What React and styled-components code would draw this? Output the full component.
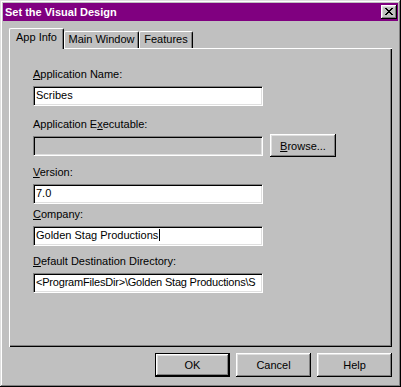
import React from 'react';
import styled, { createGlobalStyle } from 'styled-components';

const GlobalStyle = createGlobalStyle`
  html, body {
    margin: 0;
    padding: 0;
    background: #c0c0c0;
  }
  body {
    font-family: "Liberation Sans", Arial, sans-serif;
    font-size: 11px;
    color: #000;
  }
`;

const bevelOut = `
  box-shadow: inset -1px -1px #000, inset 1px 1px #fff, inset -2px -2px #808080, inset 2px 2px #dfdfdf;
`;

const Win = styled.div`
  box-sizing: border-box;
  width: 401px;
  height: 387px;
  padding: 3px;
  background: #c0c0c0;
  box-shadow: inset -1px -1px #000, inset 1px 1px #dfdfdf, inset -2px -2px #808080, inset 2px 2px #fff;
  display: flex;
  flex-direction: column;
`;

const TitleBar = styled.div`
  height: 18px;
  flex: none;
  background: #800080;
  display: flex;
  align-items: center;
  justify-content: space-between;
  padding: 0 1px 0 2px;
`;

const Title = styled.span`
  color: #fff;
  font-weight: bold;
  font-size: 11px;
  line-height: 13px;
`;

const CloseBtn = styled.button`
  width: 16px;
  height: 14px;
  padding: 0 1px 1px 0;
  border: 0;
  background: #c0c0c0;
  ${bevelOut}
  display: flex;
  align-items: center;
  justify-content: center;
`;

const Body = styled.div`
  flex: 1;
  padding: 7px 6px 7px;
  display: flex;
  flex-direction: column;
`;

const TabStrip = styled.div`
  height: 20px;
  display: flex;
  align-items: flex-end;
  position: relative;
  z-index: 1;
`;

const Tab = styled.div`
  box-sizing: border-box;
  width: ${p => p.w}px;
  height: ${p => (p.active ? 21 : 17)}px;
  margin-bottom: ${p => (p.active ? -1 : 0)}px;
  background: #c0c0c0;
  border-top: 1px solid #fff;
  border-left: 1px solid #fff;
  border-right: 1px solid #000;
  border-radius: 2px 2px 0 0;
  box-shadow: inset -1px 0 #808080;
  text-align: center;
  line-height: 13px;
  padding-top: ${p => (p.active ? 2 : 1)}px;
`;

const Panel = styled.div`
  box-sizing: border-box;
  height: 299px;
  background: #c0c0c0;
  box-shadow: inset 1px 1px #fff, inset -1px -1px #000, inset -2px -2px #808080;
  padding: 20px 0 0 24px;
`;

const Field = styled.div`
  margin-top: ${p => p.mt || 0}px;
`;

const Label = styled.label`
  display: block;
  line-height: 13px;
  margin-bottom: 5px;
`;

const Row = styled.div`
  display: flex;
  align-items: center;
  gap: 7px;
`;

const TextBox = styled.div`
  box-sizing: border-box;
  width: 230px;
  height: 20px;
  padding: 0 1px 0 2px;
  line-height: 16px;
  letter-spacing: ${p => (p.tight ? '-0.2px' : 'normal')};
  background: ${p => (p.disabled ? '#c0c0c0' : '#fff')};
  border: 1px solid;
  border-color: #808080 #fff #fff #808080;
  box-shadow: inset 1px 1px #000, inset -1px -1px #dfdfdf;
  white-space: nowrap;
  overflow: hidden;
`;

const Caret = styled.span`
  display: inline-block;
  width: 1px;
  height: 12px;
  background: #000;
  vertical-align: -2px;
  margin-left: 1px;
`;

const Button = styled.button`
  box-sizing: border-box;
  width: ${p => p.w || 75}px;
  height: ${p => p.h || 24}px;
  margin: ${p => p.m || 0};
  padding: 0;
  font: 11px "Liberation Sans", Arial, sans-serif;
  color: #000;
  background: #c0c0c0;
  border: ${p => (p.primary ? '1px solid #000' : '0')};
  ${bevelOut}
`;

const ButtonRow = styled.div`
  display: flex;
  justify-content: flex-end;
  gap: 6px;
  margin-top: 6px;
`;

function CloseGlyph() {
  return (
    <svg width="8" height="7" viewBox="0 0 8 7" shapeRendering="crispEdges">
      <path
        fill="#000"
        d="M0 0h2v1H0z M6 0h2v1H6z M1 1h2v1H1z M5 1h2v1H5z M2 2h4v1H2z M3 3h2v1H3z M2 4h4v1H2z M1 5h2v1H1z M5 5h2v1H5z M0 6h2v1H0z M6 6h2v1H6z"
      />
    </svg>
  );
}

export default function App() {
  return (
    <>
      <GlobalStyle />
      <Win>
        <TitleBar>
          <Title>Set the Visual Design</Title>
          <CloseBtn aria-label="Close">
            <CloseGlyph />
          </CloseBtn>
        </TitleBar>
        <Body>
          <TabStrip>
            <Tab w={55} active>App Info</Tab>
            <Tab w={75}>Main Window</Tab>
            <Tab w={54}>Features</Tab>
          </TabStrip>
          <Panel>
            <Field>
              <Label><u>A</u>pplication Name:</Label>
              <TextBox>Scribes</TextBox>
            </Field>
            <Field mt={12}>
              <Label>Application E<u>x</u>ecutable:</Label>
              <Row>
                <TextBox disabled />
                <Button w={66} h={23} m="-2px 0 -1px 0"><u>B</u>rowse...</Button>
              </Row>
            </Field>
            <Field mt={10}>
              <Label><u>V</u>ersion:</Label>
              <TextBox>7.0</TextBox>
            </Field>
            <Field mt={4}>
              <Label><u>C</u>ompany:</Label>
              <TextBox>Golden Stag Productions<Caret /></TextBox>
            </Field>
            <Field mt={9}>
              <Label><u>D</u>efault Destination Directory:</Label>
              <TextBox tight>&lt;ProgramFilesDir&gt;\Golden Stag Productions\S</TextBox>
            </Field>
          </Panel>
          <ButtonRow>
            <Button primary>OK</Button>
            <Button>Cancel</Button>
            <Button>Help</Button>
          </ButtonRow>
        </Body>
      </Win>
    </>
  );
}
